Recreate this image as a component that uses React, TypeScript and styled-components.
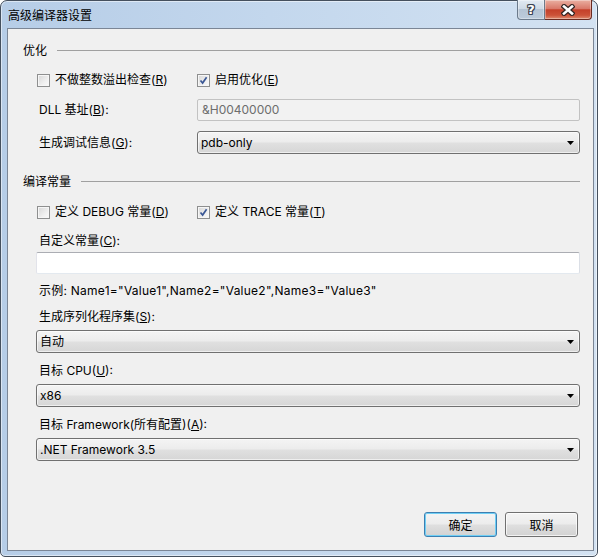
import React from "react";
import styled, { createGlobalStyle } from "styled-components";

const GlobalStyle = createGlobalStyle`
  html, body { margin: 0; padding: 0; background: #ffffff; }
  body {
    font-family: "Inter", "Noto Sans CJK SC", sans-serif;
    font-size: 12px;
    color: #000000;
  }
  *, *::before, *::after { box-sizing: border-box; }
`;

const Window = styled.div`
  width: 598px;
  height: 557px;
  display: flex;
  flex-direction: column;
  border: 1px solid #45505e;
  border-radius: 7px 7px 5px 5px;
  background: linear-gradient(to right, #b6cde7 0%, #c3d7ed 45%, #d3e2f2 100%);
  box-shadow: inset 0 0 0 1px rgba(255, 255, 255, 0.5);
`;

const TitleBar = styled.div`
  height: 27px;
  flex: none;
  display: flex;
  align-items: flex-start;
  justify-content: space-between;
  padding: 0 5px 0 7px;
`;

const TitleText = styled.div`
  margin-top: 6px;
  line-height: 16px;
  font-family: "Noto Sans CJK SC", sans-serif;
  font-size: 12px;
  color: #000;
`;

const CaptionButtons = styled.div`
  display: flex;
  margin-top: -1px;
  height: 20px;
`;

const CaptionButton = styled.div<{ $variant: "help" | "close" }>`
  height: 20px;
  width: ${(p) => (p.$variant === "help" ? 28 : 47)}px;
  display: flex;
  align-items: center;
  justify-content: center;
  border: 1px solid ${(p) => (p.$variant === "help" ? "#6b7a8b" : "#6a2a20")};
  border-top: none;
  border-left: ${(p) => (p.$variant === "help" ? "1px solid #6b7a8b" : "none")};
  border-radius: ${(p) => (p.$variant === "help" ? "0 0 0 4px" : "0 0 4px 0")};
  background: ${(p) =>
    p.$variant === "help"
      ? "linear-gradient(#e2eaf2 0%, #cfdae6 45%, #b5c4d4 50%, #bccbdb 100%)"
      : "linear-gradient(#eab0a2 0%, #d9796a 45%, #c4402a 52%, #cc5238 80%, #de8c70 100%)"};
  box-shadow: inset 0 0 0 1px rgba(255, 255, 255, 0.35);
`;

const HelpGlyph = styled.span`
  font-family: "DejaVu Sans", sans-serif;
  font-weight: bold;
  font-size: 13px;
  line-height: 13px;
  color: #ffffff;
  text-shadow: 1px 0 #3b4350, -1px 0 #3b4350, 0 1px #3b4350, 0 -1px #3b4350,
    1px 1px #3b4350, -1px -1px #3b4350, 1px -1px #3b4350, -1px 1px #3b4350;
  margin-top: -1px;
`;

const Content = styled.div`
  flex: 1;
  margin: 0 3px 5px 6px;
  border: 1px solid #7b8696;
  background: #f0f0f0;
  display: flex;
  flex-direction: column;
  padding: 14px 13px 13px 15px;
  font-family: "Inter", "Noto Sans CJK SC", sans-serif;
  font-size: 12px;
  line-height: 16px;
`;

const GroupHeader = styled.div<{ $mt?: number }>`
  display: flex;
  align-items: center;
  gap: 10px;
  height: 16px;
  margin-top: ${(p) => p.$mt ?? 0}px;
`;

const GroupTitle = styled.span`
  white-space: nowrap;
`;

const GroupLine = styled.div`
  flex: 1;
  height: 1px;
  background: #a0a0a0;
  margin-top: -2px;
`;

const GroupBody = styled.div`
  display: flex;
  flex-direction: column;
  padding-left: 13px;
`;

const CheckRow = styled.div<{ $mt: number }>`
  display: grid;
  grid-template-columns: 160px 1fr;
  height: 16px;
  margin-top: ${(p) => p.$mt}px;
`;

const CheckItem = styled.label`
  display: flex;
  align-items: center;
  gap: 5px;
  padding-left: 1px;
  white-space: nowrap;
`;

const Box = styled.span`
  width: 13px;
  height: 13px;
  flex: none;
  display: flex;
  align-items: center;
  justify-content: center;
  border: 1px solid #8e8f8f;
  background: linear-gradient(135deg, #d6d6d6 0%, #efefef 60%, #fbfbfb 100%);
  box-shadow: inset 0 0 0 1px #f6f6f6;
`;

const FormRow = styled.div<{ $mt: number }>`
  display: grid;
  grid-template-columns: 161px 1fr;
  align-items: center;
  margin-top: ${(p) => p.$mt}px;
`;

const RowLabel = styled.span`
  padding-left: 3px;
  white-space: nowrap;
`;

const FieldLabel = styled.div<{ $mt: number }>`
  padding-left: 3px;
  height: 16px;
  white-space: nowrap;
  margin-top: ${(p) => p.$mt}px;
`;

const Select = styled.div<{ $mt?: number }>`
  height: 23px;
  display: flex;
  align-items: center;
  justify-content: space-between;
  padding: 0 5px 0 3px;
  border: 1px solid #707070;
  border-radius: 3px;
  background: linear-gradient(#f4f4f4 0%, #ececec 48%, #e0e0e0 52%, #d6d6d6 100%);
  box-shadow: inset 0 0 0 1px rgba(255, 255, 255, 0.6);
  margin-top: ${(p) => p.$mt ?? 0}px;
`;

const TextBox = styled.div<{ $mt: number }>`
  height: 22px;
  background: #ffffff;
  border: 1px solid;
  border-color: #abadb3 #dbdfe6 #e3e9ef #e2e3ea;
  border-radius: 2px;
  margin-top: ${(p) => p.$mt}px;
`;

const DisabledBox = styled.div`
  height: 22px;
  display: flex;
  align-items: center;
  padding-left: 4px;
  background: #f2f2f2;
  border: 1px solid #c2c2c2;
  border-radius: 2px;
  color: #6d6d6d;
`;

const Hint = styled.div<{ $mt: number }>`
  padding-left: 3px;
  height: 16px;
  white-space: nowrap;
  letter-spacing: 0.25px;
  margin-top: ${(p) => p.$mt}px;
`;

const ButtonRow = styled.div`
  margin-top: auto;
  display: flex;
  justify-content: flex-end;
  gap: 8px;
  padding-right: 2px;
`;

const PushButton = styled.div<{ $default?: boolean }>`
  width: 73px;
  height: 25px;
  display: flex;
  align-items: center;
  justify-content: center;
  font-family: "Noto Sans CJK SC", sans-serif;
  border: 1px solid ${(p) => (p.$default ? "#3c7fb1" : "#707070")};
  border-radius: 3px;
  background: linear-gradient(#f4f4f4 0%, #ececec 48%, #dfdfdf 52%, #d2d2d2 100%);
  box-shadow: ${(p) =>
    p.$default ? "inset 0 0 0 1px #6fcff5" : "inset 0 0 0 1px rgba(255,255,255,0.7)"};
`;

const Key = styled.span`
  text-decoration: underline;
`;

const Arrow = () => (
  <svg width="7" height="4" viewBox="0 0 7 4">
    <polygon points="0,0 7,0 3.5,4" fill="#000" />
  </svg>
);

const CheckMark = () => (
  <svg width="9" height="9" viewBox="0 0 9 9">
    <path d="M1.5 4.5 L3.6 7 L7.6 1.2" fill="none" stroke="#3a5795" strokeWidth="1.7" />
  </svg>
);

const CloseGlyph = () => (
  <svg width="14" height="12" viewBox="0 0 14 12">
    <path d="M3 2.5 L11 9.5 M11 2.5 L3 9.5" stroke="#352624" strokeWidth="5" strokeLinecap="square" />
    <path d="M3 2.5 L11 9.5 M11 2.5 L3 9.5" stroke="#ffffff" strokeWidth="2.6" strokeLinecap="square" />
  </svg>
);

const Checkbox = ({ checked, children }: { checked?: boolean; children: React.ReactNode }) => (
  <CheckItem>
    <Box>{checked ? <CheckMark /> : null}</Box>
    <span>{children}</span>
  </CheckItem>
);

const Combo = ({ value, mt }: { value: string; mt?: number }) => (
  <Select $mt={mt}>
    <span>{value}</span>
    <Arrow />
  </Select>
);

export default function App() {
  return (
    <>
      <GlobalStyle />
      <Window>
        <TitleBar>
          <TitleText>高级编译器设置</TitleText>
          <CaptionButtons>
            <CaptionButton $variant="help">
              <HelpGlyph>?</HelpGlyph>
            </CaptionButton>
            <CaptionButton $variant="close">
              <CloseGlyph />
            </CaptionButton>
          </CaptionButtons>
        </TitleBar>
        <Content>
          <GroupHeader>
            <GroupTitle>优化</GroupTitle>
            <GroupLine />
          </GroupHeader>
          <GroupBody>
            <CheckRow $mt={13}>
              <Checkbox>
                不做整数溢出检查(<Key>R</Key>)
              </Checkbox>
              <Checkbox checked>
                启用优化(<Key>E</Key>)
              </Checkbox>
            </CheckRow>
            <FormRow $mt={11}>
              <RowLabel>
                DLL 基址(<Key>B</Key>):
              </RowLabel>
              <DisabledBox>&amp;H00400000</DisabledBox>
            </FormRow>
            <FormRow $mt={10}>
              <RowLabel>
                生成调试信息(<Key>G</Key>):
              </RowLabel>
              <Combo value="pdb-only" />
            </FormRow>
          </GroupBody>

          <GroupHeader $mt={20}>
            <GroupTitle>编译常量</GroupTitle>
            <GroupLine />
          </GroupHeader>
          <GroupBody>
            <CheckRow $mt={14}>
              <Checkbox>
                定义 DEBUG 常量(<Key>D</Key>)
              </Checkbox>
              <Checkbox checked>
                定义 TRACE 常量(<Key>T</Key>)
              </Checkbox>
            </CheckRow>
            <FieldLabel $mt={13}>
              自定义常量(<Key>C</Key>):
            </FieldLabel>
            <TextBox $mt={3} />
            <Hint $mt={9}>示例: Name1="Value1",Name2="Value2",Name3="Value3"</Hint>
            <FieldLabel $mt={10}>
              生成序列化程序集(<Key>S</Key>):
            </FieldLabel>
            <Combo value="自动" mt={5} />
            <FieldLabel $mt={10}>
              目标 CPU(<Key>U</Key>):
            </FieldLabel>
            <Combo value="x86" mt={5} />
            <FieldLabel $mt={10}>
              目标 Framework(所有配置)(<Key>A</Key>):
            </FieldLabel>
            <Combo value=".NET Framework 3.5" mt={5} />
          </GroupBody>

          <ButtonRow>
            <PushButton $default>确定</PushButton>
            <PushButton>取消</PushButton>
          </ButtonRow>
        </Content>
      </Window>
    </>
  );
}
